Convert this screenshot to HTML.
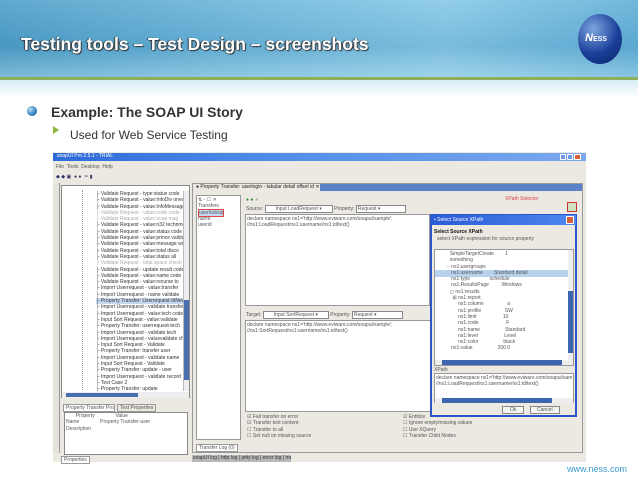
<!DOCTYPE html>
<html><head><meta charset="utf-8"><style>
*{margin:0;padding:0;box-sizing:border-box}
body{width:638px;height:479px;position:relative;overflow:hidden;background:#fff;font-family:"Liberation Sans",sans-serif}
.a{position:absolute}
.t{font-size:5px;color:#555;white-space:nowrap;line-height:6.3px}
</style></head><body>
<div class="a" style="left:0;top:0;width:638px;height:78px;background:linear-gradient(90deg,#4e9fc8 0%,#6fb8dc 40%,#86c8e6 70%,#62b0d8 100%)"></div>
<div class="a" style="left:0;top:0;width:638px;height:78px;background:linear-gradient(180deg,rgba(255,255,255,0.1),rgba(30,100,150,0.12) 60%,rgba(200,230,240,0.4))"></div>
<div class="a" style="left:0;top:77px;width:638px;height:3px;background:#8fae5a"></div>
<div class="a" style="left:0;top:80px;width:638px;height:18px;background:linear-gradient(#d6ecf4,#fff)"></div>
<div class="a" style="left:21px;top:34px;font-size:17.5px;font-weight:bold;color:#fff;text-shadow:1px 1px 1px #333,-1px 0 1px #333">Testing tools – Test Design – screenshots</div>
<div class="a" style="left:578px;top:14px;width:44px;height:50px;border-radius:50%;background:radial-gradient(circle at 35% 30%,#7fa6e0,#1a3f9a 55%,#0b2366)"></div>
<div class="a" style="left:585px;top:32px;font-size:11px;font-weight:bold;color:#fff;font-style:italic">N<span style="font-size:7px;font-style:normal">ESS</span></div>
<div class="a" style="left:27px;top:106px;width:10px;height:10px;border-radius:50%;background:radial-gradient(circle at 35% 35%,#bfe0f5,#2f7fc0 60%,#1a5a95)"></div>
<div class="a" style="left:51px;top:104px;font-size:14px;font-weight:bold;color:#333">Example: The SOAP UI Story</div>
<div class="a" style="left:53px;top:126px;width:0;height:0;border-top:4px solid transparent;border-bottom:4px solid transparent;border-left:6px solid #8bb83a"></div>
<div class="a" style="left:70px;top:128px;font-size:12px;color:#333">Used for Web Service Testing</div>
<div class="a" style="left:567px;top:464px;font-size:9px;color:#3a9ad0">www.ness.com</div>

<div class="a" style="left:53px;top:152px;width:533px;height:310px;background:#ece9e2"></div>
<div class="a" style="left:53px;top:153px;width:533px;height:8px;background:linear-gradient(90deg,#2d6ad8,#4f8ce8 40%,#7aa8ec)"></div>
<div class="a t" style="left:57px;top:153px;color:#fff">soapUI Pro 2.5.1 - TRIAL</div>
<div class="a" style="left:560px;top:154px;width:6px;height:6px;background:#6e9be8;border:1px solid #fff"></div>
<div class="a" style="left:567px;top:154px;width:6px;height:6px;background:#6e9be8;border:1px solid #fff"></div>
<div class="a" style="left:574px;top:154px;width:7px;height:6px;background:#d8603a;border:1px solid #fff"></div>
<div class="a t" style="left:56px;top:164px">File &nbsp;Tools &nbsp;Desktop &nbsp;Help</div>
<div class="a t" style="left:56px;top:174px;color:#336">◆ ◆ ▣ &nbsp;● ● &nbsp;✂ ▮</div>
<div class="a" style="left:53px;top:183px;width:7px;height:270px;background:#e4e2dc;border-right:1px solid #999"></div>
<div class="a" style="left:61px;top:185px;width:129px;height:213px;background:#fff;border:1px solid #888"></div>
<div class="a" style="left:82px;top:190px;width:1px;height:200px;border-left:1px dotted #999"></div>
<div class="a t" style="left:96px;top:191px;width:87px;overflow:hidden;line-height:6.3px;color:#333">
<div>├ Validate Request - type:status code</div><div>├ Validate Request - value:InfoDiv oneor</div><div>├ Validate Request - value:InfoMessage</div><div style="color:#aaa">├ Validate Request - value:code code</div><div style="color:#aaa">├ Validate Request - value:soap msg</div><div>├ Validate Request - value:n32 technmode</div><div>├ Validate Request - value:status code</div><div>├ Validate Request - value:prince validate</div><div>├ Validate Request - value:message with</div><div>├ Validate Request - value:total disco</div><div>├ Validate Request - value:status all</div><div style="color:#aaa">├ Validate Request - total space check</div><div>├ Validate Request - update result code</div><div>├ Validate Request - value:name code</div><div>├ Validate Request - value:recurse to</div><div>├ Import Userrequest - value:transfer</div><div>├ Import Userrequest - name validate</div><div style="background:#c4d8f0">├ Property Transfer: Userrequest-IdNew</div><div>├ Import Userrequest - validate transfer</div><div>├ Import Userrequest - value:tech code</div><div>├ Input Sort Request - value:validate</div><div>├ Property Transfer: userrequest-tech</div><div>├ Import Userrequest - validate tech</div><div>├ Import Userrequest - valuevalidate check</div><div>├ Input Sort Request - Validate</div><div>├ Property Transfer: transfer user</div><div>├ Import Userrequest - validate name</div><div>├ Input Sort Request - Validate</div><div>├ Property Transfer: update - user</div><div>├ Import Userrequest - validate record</div><div>├ Test Case 2</div><div>├ Property Transfer: update</div></div>
<div class="a" style="left:183px;top:191px;width:6px;height:200px;background:#eee;border-left:1px solid #bbb"></div>
<div class="a" style="left:184px;top:300px;width:5px;height:80px;background:#4a6fb0"></div>
<div class="a" style="left:62px;top:392px;width:127px;height:6px;background:#eee"></div>
<div class="a" style="left:66px;top:393px;width:72px;height:4px;background:#4a6fb0"></div>
<div class="a t" style="left:63px;top:404px;border:1px solid #999;padding:0 2px;background:#fff;width:52px;overflow:hidden">Property Transfer Properties</div>
<div class="a t" style="left:117px;top:404px;border:1px solid #999;padding:0 2px">Test Properties</div>
<div class="a" style="left:64px;top:412px;width:124px;height:43px;background:#fff;border:1px solid #888"></div>
<div class="a t" style="left:66px;top:413px">&nbsp;&nbsp;&nbsp;&nbsp;&nbsp;&nbsp;&nbsp;Property&nbsp;&nbsp;&nbsp;&nbsp;&nbsp;&nbsp;&nbsp;&nbsp;&nbsp;&nbsp;&nbsp;&nbsp;&nbsp;&nbsp;&nbsp;Value<br>Name&nbsp;&nbsp;&nbsp;&nbsp;&nbsp;&nbsp;&nbsp;&nbsp;&nbsp;&nbsp;&nbsp;&nbsp;&nbsp;&nbsp;&nbsp;Property Transfer-user<br>Description</div>
<div class="a t" style="left:61px;top:456px;border:1px solid #999;padding:0 2px;background:#fff">Properties</div>

<div class="a" style="left:192px;top:183px;width:391px;height:270px;background:#ece9e2;border:1px solid #999"></div>
<div class="a" style="left:320px;top:184px;width:262px;height:7px;background:#5a82c8"></div>
<div class="a t" style="left:196px;top:184px;color:#222">● Property Transfer: userlogin - tabular detail offset id ✕</div>
<div class="a" style="left:196px;top:195px;width:45px;height:245px;background:#fff;border:1px solid #999"></div>
<div class="a t" style="left:198px;top:197px">⇅ ▫ ☐ ✕<br>Transfers<br><span style="background:#c4d8f0;border:1px solid #d44">userlookup</span><br>name<br>userid</div>
<div class="a t" style="left:246px;top:197px;color:#2a8a2a">● ● ✓</div>
<div class="a t" style="left:246px;top:206px">Source: <span style="border:1px solid #888;background:#fff;padding:0 10px">Input LoadRequest ▾</span> Property: <span style="border:1px solid #888;background:#fff;padding:0 25px 0 1px">Request ▾</span></div>
<div class="a" style="left:245px;top:214px;width:185px;height:92px;background:#fff;border:1px solid #999"></div>
<div class="a t" style="left:247px;top:216px">declare namespace ns1='http://www.eviware.com/soapui/sample';<br>//ns1:LoadRequest/ns1:username/ns1:id/text()</div>
<div class="a t" style="left:246px;top:312px">Target: <span style="border:1px solid #888;background:#fff;padding:0 10px">Input SortRequest ▾</span> Property: <span style="border:1px solid #888;background:#fff;padding:0 25px 0 1px">Request ▾</span></div>
<div class="a" style="left:245px;top:320px;width:332px;height:92px;background:#fff;border:1px solid #999"></div>
<div class="a t" style="left:247px;top:322px">declare namespace ns1='http://www.eviware.com/soapui/sample';<br>//ns1:SortRequest/ns1:username/ns1:id/text()</div>
<div class="a t" style="left:247px;top:414px">☑ Fail transfer on error<br>☑ Transfer text content<br>☐ Transfer to all<br>☐ Set null on missing source</div>
<div class="a t" style="left:403px;top:414px">☑ Entitize<br>☐ Ignore empty/missing values<br>☐ Use XQuery<br>☐ Transfer Child Nodes</div>
<div class="a t" style="left:196px;top:444px;border:1px solid #999;padding:0 2px;background:#fff">Transfer Log (0)</div>
<div class="a" style="left:192px;top:455px;width:99px;height:7px;background:#b8b8b8"></div>
<div class="a t" style="left:193px;top:455px;color:#333;width:98px;overflow:hidden">soapUI log | http log | jetty log | error log | memory log</div>
<div class="a t" style="left:505px;top:196px;color:#d44">XPath Selector</div>
<div class="a" style="left:567px;top:202px;width:10px;height:10px;background:#cfe3c0;border:1px solid #c33"></div>

<div class="a" style="left:430px;top:214px;width:147px;height:203px;background:#ece9e2;border:2px solid #2c56c8"></div>
<div class="a" style="left:431px;top:215px;width:145px;height:10px;background:linear-gradient(90deg,#2c5ad6,#4d88ee)"></div>
<div class="a t" style="left:434px;top:217px;color:#fff">▪ Select Source XPath</div>
<div class="a" style="left:566px;top:216px;width:8px;height:8px;background:#d8603a;border:1px solid #fff"></div>
<div class="a t" style="left:434px;top:229px;color:#111;font-weight:bold">Select Source XPath</div>
<div class="a t" style="left:437px;top:236px">select XPath expression for source property</div>
<div class="a" style="left:434px;top:249px;width:140px;height:117px;background:#fff;border:1px solid #999"></div>
<div class="a" style="left:435px;top:270px;width:133px;height:7px;background:#b8d2ee"></div>
<div class="a t" style="left:447px;top:251px">
<div>&nbsp;&nbsp;SimpleTargetCreate&nbsp;&nbsp;&nbsp;&nbsp;&nbsp;&nbsp;&nbsp;&nbsp;1</div><div>&nbsp;&nbsp;something</div><div>− ns1:usergroups</div><div>&nbsp;&nbsp;&nbsp;ns1:username&nbsp;&nbsp;&nbsp;&nbsp;&nbsp;&nbsp;&nbsp;&nbsp;Standard detail</div><div>&nbsp;&nbsp;&nbsp;ns1:type&nbsp;&nbsp;&nbsp;&nbsp;&nbsp;&nbsp;&nbsp;&nbsp;&nbsp;&nbsp;&nbsp;&nbsp;&nbsp;&nbsp;schedule</div><div>&nbsp;&nbsp;&nbsp;ns1:ResultsPage&nbsp;&nbsp;&nbsp;&nbsp;&nbsp;&nbsp;&nbsp;&nbsp;&nbsp;Windows</div><div>&nbsp;&nbsp;◻ ns1:results</div><div>&nbsp;&nbsp;&nbsp;&nbsp;⊞ ns1:report</div><div>&nbsp;&nbsp;&nbsp;&nbsp;&nbsp;&nbsp;&nbsp;&nbsp;ns1:column&nbsp;&nbsp;&nbsp;&nbsp;&nbsp;&nbsp;&nbsp;&nbsp;&nbsp;&nbsp;&nbsp;&nbsp;&nbsp;&nbsp;&nbsp;&nbsp;&nbsp;a</div><div>&nbsp;&nbsp;&nbsp;&nbsp;&nbsp;&nbsp;&nbsp;&nbsp;ns1:profile&nbsp;&nbsp;&nbsp;&nbsp;&nbsp;&nbsp;&nbsp;&nbsp;&nbsp;&nbsp;&nbsp;&nbsp;&nbsp;&nbsp;&nbsp;&nbsp;&nbsp;SW</div><div>&nbsp;&nbsp;&nbsp;&nbsp;&nbsp;&nbsp;&nbsp;&nbsp;ns1:limit&nbsp;&nbsp;&nbsp;&nbsp;&nbsp;&nbsp;&nbsp;&nbsp;&nbsp;&nbsp;&nbsp;&nbsp;&nbsp;&nbsp;&nbsp;&nbsp;&nbsp;&nbsp;&nbsp;10</div><div>&nbsp;&nbsp;&nbsp;&nbsp;&nbsp;&nbsp;&nbsp;&nbsp;ns1:code&nbsp;&nbsp;&nbsp;&nbsp;&nbsp;&nbsp;&nbsp;&nbsp;&nbsp;&nbsp;&nbsp;&nbsp;&nbsp;&nbsp;&nbsp;&nbsp;&nbsp;&nbsp;&nbsp;&nbsp;F</div><div>&nbsp;&nbsp;&nbsp;&nbsp;&nbsp;&nbsp;&nbsp;&nbsp;ns1:name&nbsp;&nbsp;&nbsp;&nbsp;&nbsp;&nbsp;&nbsp;&nbsp;&nbsp;&nbsp;&nbsp;&nbsp;&nbsp;&nbsp;&nbsp;&nbsp;&nbsp;&nbsp;Standard</div><div>&nbsp;&nbsp;&nbsp;&nbsp;&nbsp;&nbsp;&nbsp;&nbsp;ns1:level&nbsp;&nbsp;&nbsp;&nbsp;&nbsp;&nbsp;&nbsp;&nbsp;&nbsp;&nbsp;&nbsp;&nbsp;&nbsp;&nbsp;&nbsp;&nbsp;&nbsp;&nbsp;&nbsp;Level</div><div>&nbsp;&nbsp;&nbsp;&nbsp;&nbsp;&nbsp;&nbsp;&nbsp;ns1:color&nbsp;&nbsp;&nbsp;&nbsp;&nbsp;&nbsp;&nbsp;&nbsp;&nbsp;&nbsp;&nbsp;&nbsp;&nbsp;&nbsp;&nbsp;&nbsp;&nbsp;&nbsp;black</div><div>&nbsp;&nbsp;&nbsp;ns1:value&nbsp;&nbsp;&nbsp;&nbsp;&nbsp;&nbsp;&nbsp;&nbsp;&nbsp;&nbsp;&nbsp;&nbsp;&nbsp;&nbsp;&nbsp;&nbsp;&nbsp;&nbsp;200.0</div></div>
<div class="a" style="left:568px;top:250px;width:5px;height:110px;background:#eee"></div>
<div class="a" style="left:568px;top:291px;width:5px;height:62px;background:#3e66b0"></div>
<div class="a" style="left:435px;top:360px;width:138px;height:5px;background:#eee"></div>
<div class="a" style="left:442px;top:360px;width:120px;height:5px;background:#3e66b0"></div>
<div class="a t" style="left:434px;top:367px">XPath</div>
<div class="a" style="left:434px;top:373px;width:140px;height:30px;background:#fff;border:1px solid #999"></div>
<div class="a t" style="left:436px;top:375px;width:136px;overflow:hidden">declare namespace ns1='http://www.eviware.com/soapui/sample';<br>//ns1:LoadRequest/ns1:username/ns1:id/text()</div>
<div class="a" style="left:435px;top:398px;width:138px;height:5px;background:#eee"></div>
<div class="a" style="left:442px;top:398px;width:110px;height:5px;background:#3e66b0"></div>
<div class="a t" style="left:502px;top:406px;border:1px solid #888;background:#f4f4f0;padding:0 7px">Ok</div>
<div class="a t" style="left:530px;top:406px;border:1px solid #888;background:#f4f4f0;padding:0 6px">Cancel</div>
</body></html>
